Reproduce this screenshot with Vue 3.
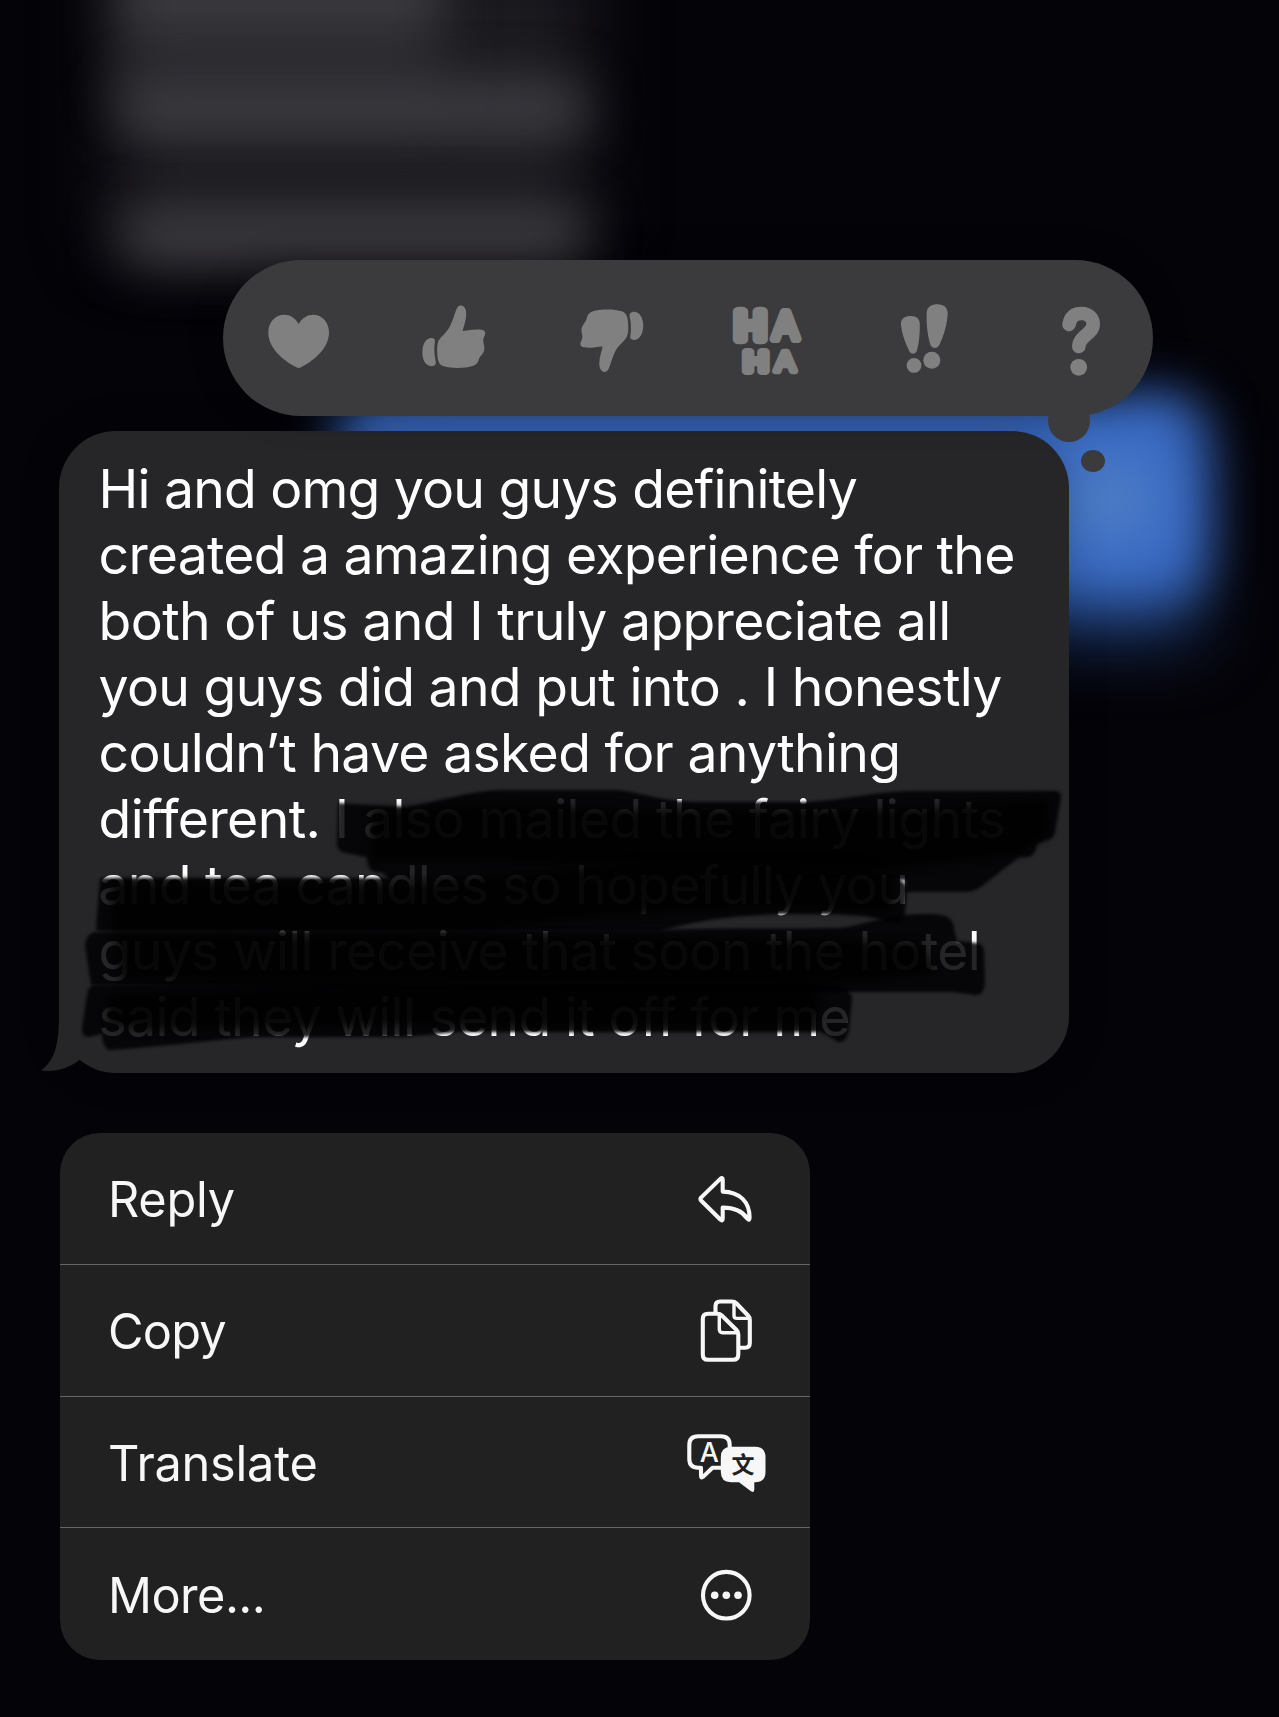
<template>
  <div class="screen">
    <div class="backdrop">
      <div class="ghost ghost-body"></div>
      <div class="ghost ghost-top"></div>
      <div class="ghost ghost-mid"></div>
      <div class="ghost ghost-low"></div>
      <div class="sent-halo"></div>
      <div class="sent"></div>
      <div class="sent-glow"></div>
    </div>

    <div class="tapbacks">
      <button v-for="name in tapbacks" :key="name" class="tapback" :aria-label="name">
        <svg v-if="name === 'love'" viewBox="0 0 80 80">
          <path d="M39.7 26 C43 20 48.5 16.7 54.2 16.7 C63.2 16.7 70 24.2 70 34.5 C70 49 57 61.5 42 69.3 Q39.7 70.5 37.4 69.3 C22.3 61.5 9.3 49 9.3 34.5 C9.3 24.2 16.2 16.7 25.2 16.7 C31 16.7 36.4 20 39.7 26Z" />
        </svg>
        <svg v-else-if="name === 'like'" viewBox="0 0 80 80">
          <path d="M45 7.5 C49 6.8 51.6 11 51.2 16.5 C50.8 23 48.8 28.5 47.6 33 C53 32.6 57 31.6 62 31.6 C66 31.6 70.3 31.6 70.2 35.4 C70.1 38 68.3 39.2 68.2 42 C68.1 45.5 70 48 69.2 52 C68.4 56.5 65 57.5 64 61 C63.2 64 62 66.3 58.3 67.7 C50 70.6 37 70.6 28.8 68.3 C24.5 67 22.8 63.5 22.4 57.5 C22 50 22 45.5 24 42 C26 38.5 30 36 33 31.5 C37 25.5 39 18 40.6 13.5 C41.8 10 43 7.9 45 7.5Z" />
          <path d="M16.5 39.9 Q20.3 39.9 19.9 43.6 C18.8 50.5 19.3 57 20.8 64 Q21.3 67.6 17.5 68.1 C10.8 68.6 7.4 62.5 7.4 54.5 C7.4 46 10.6 40 16.5 39.9Z" />
        </svg>
        <svg v-else-if="name === 'dislike'" viewBox="0 0 80 80">
          <path d="M33.2 73.9 C29.3 74.3 27.1 70.2 27.3 64.8 C27.5 58.8 29.6 53.5 30.7 48.4 C25.5 48.8 21.5 49.7 16.4 49.7 C12.4 49.7 8.2 49.3 8.4 45.6 C8.5 43.2 10.3 42 10.4 39.2 C10.5 36 8.8 33.7 9.7 30 C10.7 26.2 13.8 24 14.7 20.5 C15.6 17 16.8 15 20.4 13.6 C28.5 11 41 11 49.5 13.2 C54 14.5 55.6 18 56 24 C56.6 31.5 56.4 35.8 54.4 39.4 C52.4 43 48.4 45.4 45.4 49.8 C41.3 56 39.5 63.3 37.9 67.8 C36.6 71.4 35.4 73.6 33.2 73.9Z" />
          <path d="M61.7 41.9 Q57.8 41.7 58.4 38 C59.5 31 59 24.8 57.6 18 Q57.1 14.3 60.8 13.9 C67.5 13.4 71.2 19.5 71.2 27.5 C71.2 36 67.8 42 61.7 41.9Z" />
        </svg>
        <svg v-else-if="name === 'laugh'" viewBox="0 0 80 80" class="haha">
          <text x="7" y="41" font-size="38.5" stroke-width="10.4" textLength="30.6" lengthAdjust="spacingAndGlyphs">H</text>
          <text x="45.2" y="40.8" font-size="38.5" stroke-width="8" textLength="24.6" lengthAdjust="spacingAndGlyphs">A</text>
          <text x="15.8" y="72.8" font-size="28" stroke-width="8" textLength="24" lengthAdjust="spacingAndGlyphs">H</text>
          <text x="47.2" y="72.6" font-size="28.5" stroke-width="6.4" textLength="19.8" lengthAdjust="spacingAndGlyphs">A</text>
        </svg>
        <svg v-else-if="name === 'emphasize'" viewBox="0 0 80 80">
          <path d="M25 18 C31 17.6 34.8 20.5 34.8 26 C35 36 34 45 32 52 C30.8 57 25.8 57 24 52.5 C20 44 16.8 36 16 27 C15.5 21.5 19 18.4 25 18Z" />
          <path d="M51.5 6.2 C58.5 5.8 63 9.5 62.7 16 C62 27 58.6 38 54.6 46.5 C52.4 51.5 46.4 51 45 45.8 C42.4 36 41.3 26 41.6 15.5 C41.8 9.5 45.5 6.5 51.5 6.2Z" />
          <circle cx="29" cy="67.4" r="7.4" />
          <circle cx="46.8" cy="62.3" r="8.5" />
        </svg>
        <svg v-else viewBox="0 0 80 80">
          <path class="hook" d="M28 26.5 C29.5 18.5 34 15.5 40.5 15.5 C47.5 15.5 52.2 20 52.2 26 C52.2 36.5 38.5 37 37.8 48.5" />
          <circle cx="37.7" cy="69.3" r="8.4" />
        </svg>
      </button>
      <span class="tail-big"></span>
      <span class="tail-small"></span>
    </div>

    <div class="message">
      <svg class="message-tail" viewBox="0 0 70 60">
        <path d="M18 0 C18 26 16 46 0 57.5 C14 59.5 29 55 39 46.5 C48 54 60 59 72 59 L72 0Z" />
      </svg>
      <p class="message-text">
        <span
          v-for="line in lines"
          :key="line.text"
          class="line"
          :style="{ letterSpacing: `${line.spacing}px` }"
        >{{ line.text }}</span>
      </p>
      <svg class="marker" viewBox="59 431 1010 642">
        <g class="marker-soft">
          <path d="M338 803 L405 807 C430 804 470 790 505 790 H613 C640 791 660 802 700 802 H800 C840 802 870 791 917 791 H1054 Q1062 791 1061 798 L1055 832 Q1053 840 1045 841 L1037 844 Q1035 857 1027 857 H1019 L986 883 Q976 892 965 892 H906 V880 H390 L382 872 Q367 875 367 857 L345 853 Q337 851 337 843Z" />
          <path d="M100 878 H880 Q906 876 907 890 L905 914 Q904 923 896 923 L866 916 L838 914 H781 C730 916 700 920 660 931 H98 L96 928Z" />
          <path d="M94 932 L660 930 C720 928 780 929 838 928 C865 926 881 914 930 914 Q951 914 953 924 L957 941 L977 943 Q984 944 984 952 L985 983 Q984 996 975 995 L953 992 H660 L91 985 L85 945 Q86 935 94 932Z" />
          <path d="M93 985 L835 984 Q851 990 852 998 L849 1030 Q846 1044 838 1042 L821 1032 H458 L405 1037 H251 C200 1042 160 1046 112 1050 Q103 1051 102 1034 L88 1037 Q82 1037 82 1029 L87 995 Q88 987 93 985Z" />
        </g>
        <g class="marker-core">
          <path d="M372 810 L505 804 L640 810 L800 810 L930 808 L1048 798 L1050 832 L1022 854 L900 868 L370 860Z" />
          <path d="M112 881 L400 884 L650 862 L860 862 L896 880 L890 914 L780 908 L600 916 L480 930 L112 932Z" />
          <path d="M116 936 L600 936 L920 942 L935 972 L860 982 L120 980Z" />
          <path d="M108 994 L300 988 L800 984 L820 1000 L816 1029 L400 1026 L150 1030 L108 1024Z" />
        </g>
      </svg>
    </div>

    <div class="menu">
      <div v-for="item in menu" :key="item.label" class="menu-row">
        <span class="menu-label" :style="{ letterSpacing: `${item.spacing}px` }">{{ item.label }}</span>
        <svg v-if="item.icon === 'reply'" class="menu-icon" viewBox="0 0 80 80">
          <path d="M15.3 38.4 L34.3 19.9 Q36.7 18 36.7 21 V32.6 C54 33 63.6 43 63.6 58.5 Q63.6 62.5 61.3 59.5 C56 51.5 48.5 48.6 36.7 48.6 V59.5 Q36.7 62.6 34.3 60.5 L15.3 41.8 Q13.5 40 15.3 38.4Z" />
        </svg>
        <svg v-else-if="item.icon === 'copy'" class="menu-icon" viewBox="0 0 80 80">
          <path d="M29.5 21 V15 Q29.5 10.5 34 10.5 H46 Q48.5 10.5 50.3 12.3 L62 24.5 Q63.8 26.3 63.8 29 V52 Q63.8 56.7 59.2 56.7 H54" />
          <path d="M48 11 V24.5 Q48 27.4 51 27.4 H63" class="fold" />
          <path d="M22 22.7 H31.5 Q34 22.7 35.8 24.5 L50.5 39 Q52.3 40.8 52.3 43.5 V63.5 Q52.3 68.8 47 68.8 H22 Q16.8 68.8 16.8 63.5 V28 Q16.8 22.7 22 22.7Z" />
          <path d="M33.3 23.5 V38.3 Q33.3 41.7 36.6 41.7 H51.5" class="fold" />
        </svg>
        <svg v-else-if="item.icon === 'translate'" class="menu-icon" viewBox="0 0 80 80">
          <path d="M35 45.7 H26.5 L17 54.9 Q15 56.2 15 53.5 V45.7 H12 Q3.3 45.7 3.3 37 V23 Q3.3 14.3 12 14.3 H35 Q43.7 14.3 43.7 23 V25" />
          <text x="23.4" y="40.4" class="glyph-a">A</text>
          <path class="solid" d="M45 24.8 H69 Q79.5 24.8 79.5 35.3 V49.7 Q79.5 60.2 69 60.2 H68.3 V67.5 Q68.3 71.4 65 69.2 L53 60.2 H45 Q34.8 60.2 34.8 49.7 V35.3 Q34.8 24.8 45 24.8Z" />
          <text x="57" y="50.8" class="glyph-wen">文</text>
        </svg>
        <svg v-else class="menu-icon" viewBox="0 0 80 80">
          <circle cx="40.3" cy="41.2" r="23.3" />
          <circle v-for="x in [28.7, 40.3, 52]" :key="x" class="solid" :cx="x" cy="41.2" r="3.8" />
        </svg>
      </div>
    </div>
  </div>
</template>

<script setup>
const tapbacks = ['love', 'like', 'dislike', 'laugh', 'emphasize', 'question']

// letter spacing per line, keeps the line ends where iOS puts them
const lines = [
  { text: 'Hi and omg you guys definitely', spacing: -0.8 },
  { text: 'created a amazing experience for the', spacing: -0.78 },
  { text: 'both of us and I truly appreciate all', spacing: -0.65 },
  { text: 'you guys did and put into . I honestly', spacing: -0.7 },
  { text: 'couldn’t have asked for anything', spacing: -0.67 },
  { text: 'different. I also mailed the fairy lights', spacing: -0.6 },
  { text: 'and tea candles so hopefully you', spacing: -0.79 },
  { text: 'guys will receive that soon the hotel', spacing: -0.69 },
  { text: 'said they will send it off for me', spacing: -0.68 }
]

const menu = [
  { label: 'Reply', icon: 'reply', spacing: -0.3 },
  { label: 'Copy', icon: 'copy', spacing: -0.8 },
  { label: 'Translate', icon: 'translate', spacing: -0.25 },
  { label: 'More...', icon: 'more', spacing: -0.55 }
]
</script>

<style>
body { background: #040308; }
</style>

<style scoped>
.screen {
  position: relative;
  box-sizing: border-box;
  width: 1279px;
  height: 1717px;
  padding-top: 260px;
  overflow: hidden;
  background: #040308;
  font-family: Inter, "Noto Sans CJK SC", sans-serif;
}

/* blurred conversation behind the menu */
.backdrop { position: absolute; inset: 0; }
.backdrop div { position: absolute; }
.ghost { left: 118px; border-radius: 24px; filter: blur(25px); background: #3d3c41; }
.ghost-body { left: 110px; top: -60px; width: 480px; height: 310px; background: #1b1a1f; filter: blur(36px); }
.ghost-top { top: -60px; width: 325px; height: 170px; background: linear-gradient(#3a393e 50%, #26252a 62%); }
.ghost-mid { top: 80px; width: 470px; height: 58px; }
.ghost-low { top: 206px; width: 470px; height: 58px; }
.sent-halo { left: 400px; top: 440px; width: 800px; height: 200px; background: #1b376a; filter: blur(34px); }
.sent { left: 337px; top: 393px; width: 868px; height: 205px; border-radius: 40px; background: #3a6bc4; filter: blur(25px); }
.sent-glow { left: 1050px; top: 460px; width: 110px; height: 80px; border-radius: 50%; background: #4d7cc4; filter: blur(26px); }

.tapbacks {
  position: relative;
  z-index: 2;
  display: flex;
  justify-content: space-between;
  align-items: center;
  box-sizing: border-box;
  width: 930px;
  height: 156px;
  margin-left: 223px;
  padding: 0 32px 0 36px;
  border-radius: 78px;
  background: #3b3b3d;
  box-shadow: 0 0 36px rgba(0, 0, 0, 0.2);
}
.tapback { width: 80px; height: 80px; padding: 0; border: 0; background: none; }
.tapback svg { display: block; width: 80px; height: 80px; fill: #808080; overflow: visible; }
.tapback .hook { fill: none; stroke: #808080; stroke-width: 13.6; stroke-linecap: round; }
.haha text { font-weight: 400; stroke: #808080; stroke-linejoin: round; }
.tail-big, .tail-small { position: absolute; border-radius: 50%; background: #3b3b3d; }
.tail-big { left: 825px; top: 140px; width: 42px; height: 42px; }
.tail-small { left: 858px; top: 190px; width: 24px; height: 22px; }

.message {
  position: relative;
  box-sizing: border-box;
  width: 1010px;
  height: 642px;
  margin: 15px 0 0 59px;
  padding: 25px 0 0 39.6px;
  border-radius: 57px;
  background: #262628;
  box-shadow: 0 0 40px rgba(0, 0, 0, 0.2);
}
.message-tail { position: absolute; left: -18px; bottom: 0; width: 70px; height: 60px; fill: #262628; }
.message-text { position: relative; margin: 0; color: #fff; font-size: 53.5px; line-height: 66px; }
.line { display: block; white-space: nowrap; }
.marker { position: absolute; left: 0; top: 0; width: 1010px; height: 642px; }
.marker-soft path { fill: #010103; fill-opacity: 0.86; filter: blur(1.6px); }
.marker-core path { fill: #000; fill-opacity: 0.76; filter: blur(4px); }

.menu {
  display: grid;
  grid-template-rows: repeat(4, 1fr);
  position: relative;
  width: 750px;
  height: 527px;
  margin: 60px 0 0 60px;
  border-radius: 40px;
  background: #212122;
  overflow: hidden;
}
.menu-row {
  display: flex;
  align-items: center;
  justify-content: space-between;
  padding: 0 44px 0 48px;
  box-shadow: inset 0 -1px #656566;
}
.menu-row:last-child { box-shadow: none; }
.menu-label { padding-top: 3px; color: #f7f7f7; font-size: 48.7px; line-height: 60px; }
.menu-icon { width: 80px; height: 80px; fill: none; stroke: #f7f7f7; stroke-width: 4.1; stroke-linejoin: round; stroke-linecap: round; overflow: visible; }
.menu-icon .fold { stroke-width: 3.4; }
.menu-icon .solid { fill: #f7f7f7; stroke: none; }
.menu-icon text { stroke: none; text-anchor: middle; }
.menu-icon .glyph-a { fill: #f7f7f7; font-size: 27px; font-weight: 500; }
.glyph-wen { fill: #212122; font: 700 23px "Noto Sans CJK SC", sans-serif; }
</style>
